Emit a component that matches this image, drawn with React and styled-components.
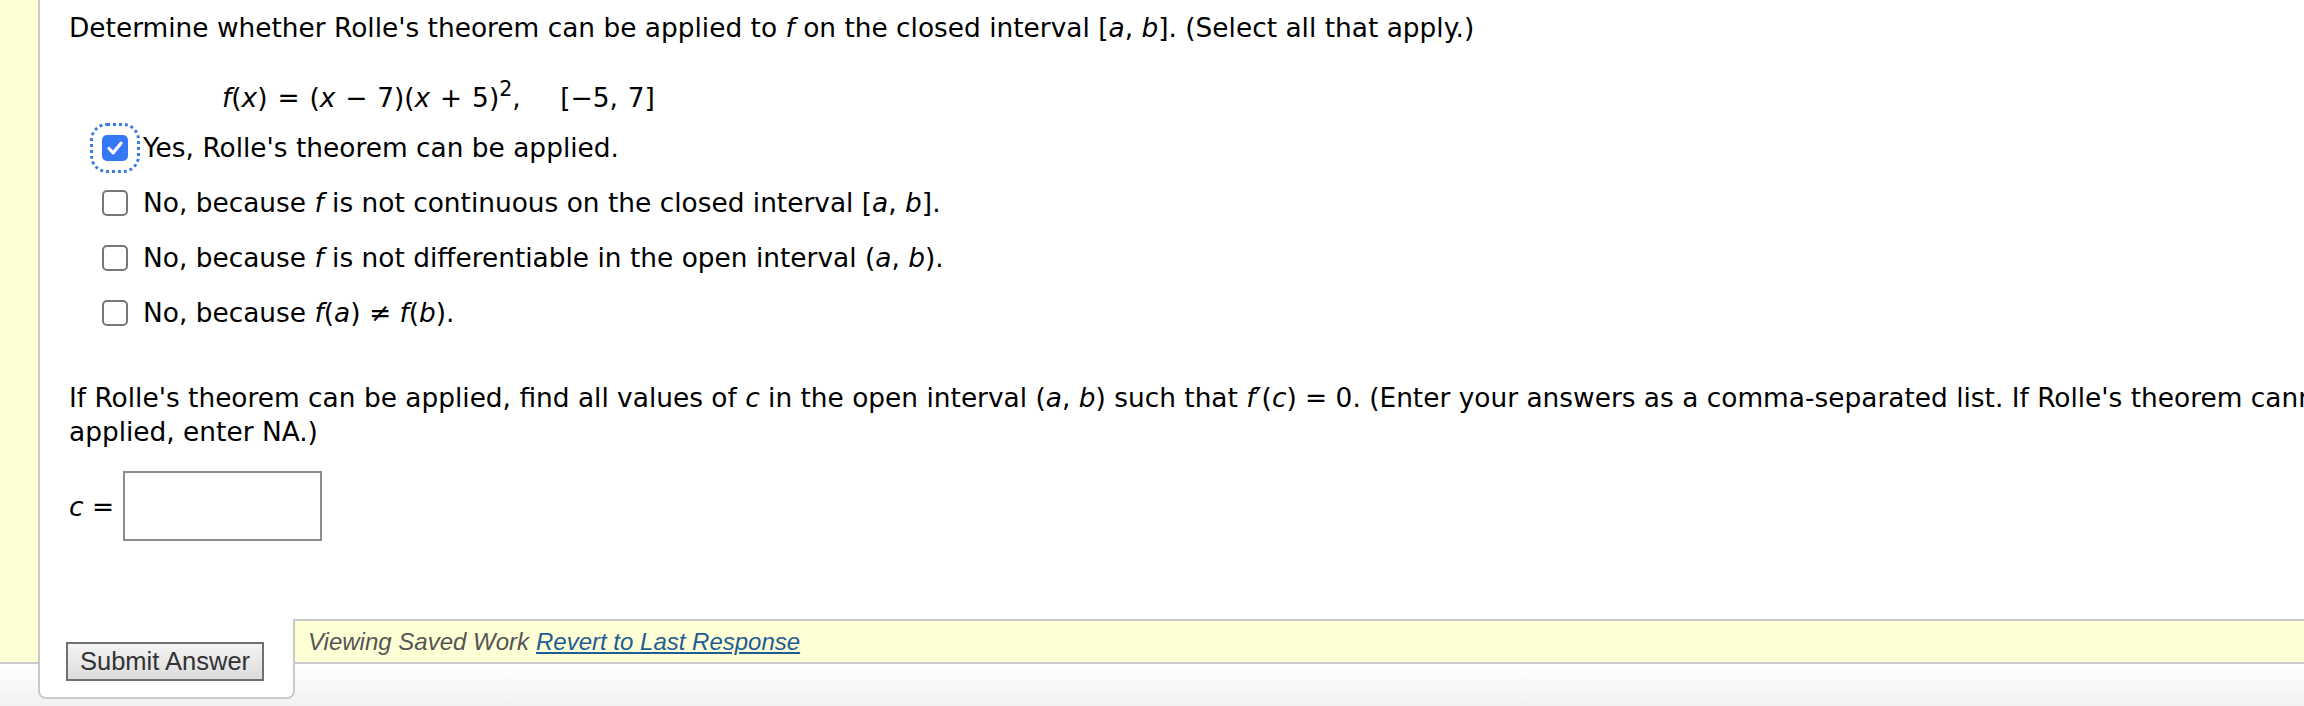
import styled, { createGlobalStyle } from 'styled-components';

const Global = createGlobalStyle`
  html, body {
    margin: 0;
    padding: 0;
  }
  body {
    height: 706px;
    overflow: hidden;
    background: linear-gradient(to bottom, #ffffff 0, #ffffff 664px, #f1f1f1 706px);
    font-family: "DejaVu Sans", Verdana, sans-serif;
  }
`;

const Shell = styled.div`
  background: #ffffd5;
  border-bottom: 2px solid #c9c9c9;
  padding-left: 38px;
`;

const Panel = styled.div`
  box-sizing: border-box;
  height: 619px;
  background: #fff;
  border-left: 2px solid #cbcbcb;
  padding: 10px 0 0 29px;
  color: #000;
  font-size: 26.4px;
  white-space: nowrap;
  overflow: hidden;
`;

const Line = styled.p`
  margin: 0;
  line-height: 36px;
`;

const Formula = styled(Line)`
  margin: 34px 0 0 153px;
  word-spacing: 1.5px;
`;

const Var = styled.i`
  font-style: italic;
`;

const Sup = styled.span`
  position: relative;
  top: -0.55em;
  font-size: 0.78em;
  line-height: 0;
`;

const Options = styled.div`
  margin-top: 4px;
`;

const Option = styled.label`
  display: flex;
  align-items: center;
  gap: 15px;
  height: 55px;
  padding-left: 33px;
`;

const Box = styled.span`
  box-sizing: border-box;
  flex: none;
  width: 26px;
  height: 26px;
  border-radius: 5px;
  display: flex;
  align-items: center;
  justify-content: center;
  background: ${(p) => (p.$checked ? '#3478f6' : '#fff')};
  border: ${(p) => (p.$checked ? 'none' : '2px solid #777')};
  outline: ${(p) => (p.$focused ? '3px dotted #3a7de0' : 'none')};
  outline-offset: 9px;
`;

const Question = styled.div`
  margin-top: 41px;
  p {
    line-height: 34px;
  }
`;

const AnswerRow = styled.div`
  display: flex;
  align-items: center;
  gap: 9px;
  margin-top: 22px;
`;

const Input = styled.div`
  box-sizing: border-box;
  width: 199px;
  height: 70px;
  border: 2px solid #8c8c8c;
  background: #fff;
`;

const Footer = styled.div`
  display: flex;
  align-items: flex-start;
`;

const Tab = styled.div`
  position: relative;
  z-index: 1;
  box-sizing: border-box;
  width: 257px;
  height: 80px;
  margin-bottom: -37px;
  padding: 23px 0 0 26px;
  background: #fff;
  border: 2px solid #c9c9c9;
  border-top: none;
  border-radius: 0 0 8px 8px;
`;

const Button = styled.button`
  box-sizing: border-box;
  height: 39px;
  padding: 0 12px;
  border: 2px solid #707070;
  background: linear-gradient(to bottom, #f4f4f4, #dcdcdc);
  color: #333;
  font-family: "Liberation Sans", Arial, sans-serif;
  font-size: 25.5px;
  line-height: 35px;
`;

const Status = styled.div`
  box-sizing: border-box;
  flex: 1;
  height: 43px;
  display: flex;
  align-items: center;
  gap: 7px;
  padding-left: 13px;
  border-top: 2px solid #c9c9c9;
  font-family: "Liberation Sans", Arial, sans-serif;
  font-size: 24px;
  font-style: italic;
  color: #555;
`;

const Link = styled.a`
  color: #1d5c97;
  text-decoration: underline;
`;

const Tick = () => (
  <svg width="26" height="26" viewBox="0 0 26 26">
    <path d="M7 13.5 L11.2 17.8 L19 8.2" fill="none" stroke="#fff" strokeWidth="3.2" strokeLinecap="round" strokeLinejoin="round" />
  </svg>
);

const options = [
  { checked: true, text: <>Yes, Rolle's theorem can be applied.</> },
  { text: <>No, because <Var>f</Var> is not continuous on the closed interval [<Var>a</Var>, <Var>b</Var>].</> },
  { text: <>No, because <Var>f</Var> is not differentiable in the open interval (<Var>a</Var>, <Var>b</Var>).</> },
  { text: <>No, because <Var>f</Var>(<Var>a</Var>) ≠ <Var>f</Var>(<Var>b</Var>).</> },
];

const App = () => {
  return (
    <>
      <Global />
      <Shell>
        <Panel>
          <Line>
            Determine whether Rolle's theorem can be applied to <Var>f</Var> on the closed interval [<Var>a</Var>, <Var>b</Var>]. (Select all that apply.)
          </Line>
          <Formula>
            <Var>f</Var>(<Var>x</Var>) = (<Var>x</Var> − 7)(<Var>x</Var> + 5)<Sup>2</Sup>,&nbsp;&nbsp;&nbsp; [−5, 7]
          </Formula>
          <Options>
            {options.map((o, i) => (
              <Option key={i}>
                <Box $checked={o.checked} $focused={o.checked}>
                  {o.checked && <Tick />}
                </Box>
                <span>{o.text}</span>
              </Option>
            ))}
          </Options>
          <Question>
            <Line>
              If Rolle's theorem can be applied, find all values of <Var>c</Var> in the open interval (<Var>a</Var>, <Var>b</Var>) such that <Var>f</Var>′(<Var>c</Var>) = 0. (Enter your answers as a comma-separated list. If Rolle's theorem cannot be
            </Line>
            <Line>applied, enter NA.)</Line>
          </Question>
          <AnswerRow>
            <span><Var>c</Var> =</span>
            <Input />
          </AnswerRow>
        </Panel>
        <Footer>
          <Tab>
            <Button>Submit Answer</Button>
          </Tab>
          <Status>
            Viewing Saved Work <Link href="#">Revert to Last Response</Link>
          </Status>
        </Footer>
      </Shell>
    </>
  );
};

export default App;
